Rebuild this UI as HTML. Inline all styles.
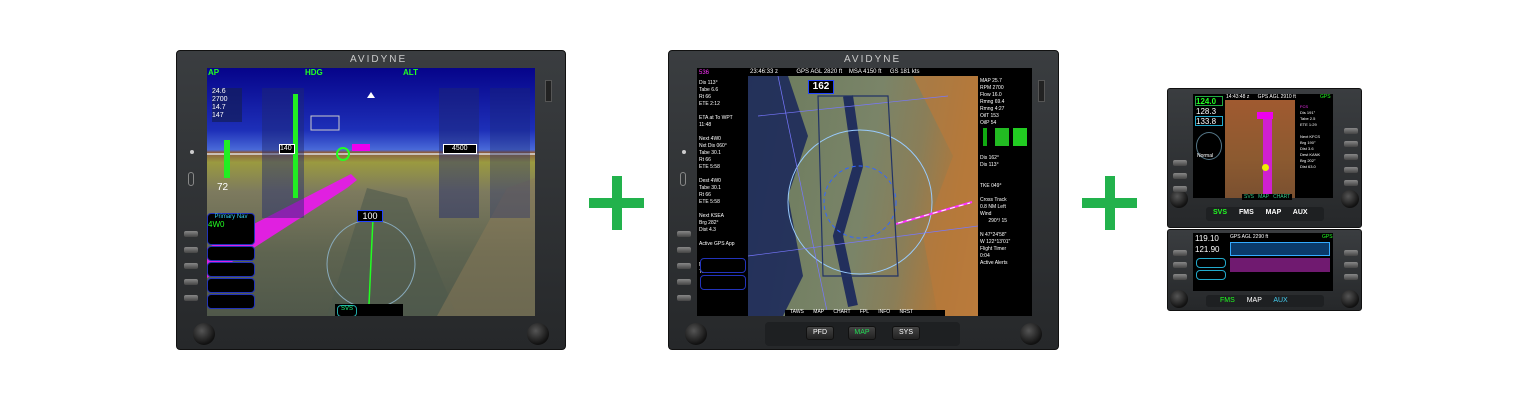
<!DOCTYPE html>
<html><head><meta charset="utf-8"><style>
*{margin:0;padding:0;box-sizing:border-box}
body{width:1536px;height:400px;background:#fff;position:relative;overflow:hidden;font-family:"Liberation Sans",sans-serif}
.a{position:absolute}
.bez{background:linear-gradient(#3a3d40,#26282a);border-radius:4px;border:1px solid #111}
.logo{color:#ccc;font-size:10px;letter-spacing:2px;font-weight:normal}
.knob{border-radius:50%;background:radial-gradient(circle at 40% 35%,#555,#111 70%)}
.btn{background:linear-gradient(#888,#444);border-radius:2px;height:6px;width:14px}
.plus{background:#22b24c}
.t{color:#fff;font-size:6px;white-space:nowrap}
.g{color:#2f2}
.m{color:#f3f}
.box{border:1px solid #2233bb;border-radius:4px;background:#000}
</style></head><body>

<!-- Device 1 PFD -->
<div class="a bez" style="left:176px;top:50px;width:390px;height:300px"></div>
<div class="a logo" style="left:350px;top:54px">AVIDYNE</div>
<div class="a" style="left:207px;top:68px;width:328px;height:248px;overflow:hidden;background:linear-gradient(#06048a 0%,#1d2fb8 25%,#4a6ad8 33%,#8a5a40 34%,#9a9a40 38%,#7d7a5e 50%,#5e6450 75%,#50584a 100%)">
 <svg class="a" style="left:0;top:0" width="328" height="248">
  <polygon points="0,180 0,210 140,120 150,112 144,106" fill="#e020e0"/>
  <polygon points="120,248 160,120 200,130 250,248" fill="#4e5a4c" opacity=".6"/>
  <polygon points="230,248 300,120 328,110 328,248" fill="#8a7a58" opacity=".5"/>
  <line x1="0" y1="86" x2="328" y2="86" stroke="#ddd" stroke-width="1.5"/>
  <circle cx="164" cy="196" r="44" fill="none" stroke="#8ab" stroke-width="1"/>
  <line x1="166" y1="150" x2="162" y2="236" stroke="#2f2" stroke-width="1.5"/>
  <circle cx="136" cy="86" r="6" fill="none" stroke="#2f2" stroke-width="2"/>
  <rect x="104" y="48" width="28" height="14" fill="none" stroke="#ccc"/>
  <polygon points="160,30 168,30 164,24" fill="#fff"/>
 </svg>
 <div class="a t g" style="left:1px;top:0;font-size:8px;font-weight:bold">AP</div>
 <div class="a t g" style="left:98px;top:0;font-size:8px;font-weight:bold">HDG</div>
 <div class="a t g" style="left:196px;top:0;font-size:8px;font-weight:bold">ALT</div>
 <div class="a" style="left:5px;top:20px;width:30px;height:34px;background:rgba(20,30,90,.7)"><div class="t" style="font-size:7px;line-height:8px">24.6<br>2700<br>14.7<br>147</div></div>
 <div class="a" style="left:17px;top:72px;width:6px;height:38px;background:#2e2"></div>
 <div class="a t" style="left:10px;top:114px;font-size:10px">72</div>
 <div class="a" style="left:55px;top:20px;width:42px;height:130px;background:rgba(30,40,110,.45)"></div>
 <div class="a" style="left:86px;top:26px;width:5px;height:104px;background:#2e2"></div>
 <div class="a" style="left:72px;top:76px;width:16px;height:10px;background:#000;border:1px solid #fff"><div class="t" style="font-size:7px">140</div></div>
 <div class="a" style="left:232px;top:20px;width:40px;height:130px;background:rgba(30,40,110,.45)"></div>
 <div class="a" style="left:236px;top:76px;width:34px;height:10px;background:#000;border:1px solid #fff"><div class="t" style="font-size:7px;padding-left:8px">4500</div></div>
 <div class="a" style="left:283px;top:20px;width:40px;height:130px;background:rgba(30,40,110,.35)"></div>
 <div class="a" style="left:145px;top:76px;width:18px;height:7px;background:#e0e"></div>
 <div class="a" style="left:150px;top:142px;width:26px;height:12px;background:#000;border:1.5px solid #24f"><div class="t" style="font-size:9px;text-align:center">100</div></div>
 <div class="a" style="left:0;top:145px;width:48px;height:94px">
  <div class="box" style="height:32px"><div class="t" style="color:#3ce;text-align:center">Primary Nav</div><div class="t g" style="font-size:8px">4W0</div></div>
  <div class="box" style="height:15px;margin-top:1px"></div>
  <div class="box" style="height:15px;margin-top:1px"></div>
  <div class="box" style="height:15px;margin-top:1px"></div>
  <div class="box" style="height:15px;margin-top:1px"></div>
 </div>
 <div class="a" style="left:128px;top:236px;width:68px;height:12px;background:#000"></div>
 <div class="a box" style="left:130px;top:237px;width:20px;height:12px;border-color:#2aa"><div class="t" style="color:#2f8;text-align:center">SVS</div></div>
</div>
<div class="a" style="left:545px;top:80px;width:7px;height:22px;background:#222;border:1px solid #555"></div>
<div class="a" style="left:190px;top:150px;width:4px;height:4px;border-radius:50%;background:#ccc"></div>
<div class="a" style="left:188px;top:172px;width:6px;height:14px;border:1px solid #888;border-radius:3px"></div>
<div class="a btn" style="left:184px;top:231px"></div>
<div class="a btn" style="left:184px;top:247px"></div>
<div class="a btn" style="left:184px;top:263px"></div>
<div class="a btn" style="left:184px;top:279px"></div>
<div class="a btn" style="left:184px;top:295px"></div>
<div class="a knob" style="left:193px;top:323px;width:22px;height:22px"></div>
<div class="a knob" style="left:527px;top:323px;width:22px;height:22px"></div>

<!-- plus 1 -->
<div class="a plus" style="left:589px;top:198px;width:55px;height:10px"></div>
<div class="a plus" style="left:612px;top:176px;width:10px;height:54px"></div>

<!-- Device 2 MFD -->
<div class="a bez" style="left:668px;top:50px;width:391px;height:300px"></div>
<div class="a logo" style="left:844px;top:54px">AVIDYNE</div>
<div class="a" style="left:697px;top:68px;width:335px;height:248px;background:#000"></div>
<div class="a" style="left:748px;top:76px;width:230px;height:240px;overflow:hidden;background:linear-gradient(100deg,#6a7a5c 0%,#7a8468 50%,#8a7e58 68%,#b0783a 85%,#c08040 100%)">
 <svg class="a" width="230" height="240">
  <path d="M40,0 L60,60 L40,120 L55,200 L35,240 L0,240 L0,0Z" fill="#0c1a5a" opacity=".75"/>
  <path d="M100,20 L110,90 L90,160 L105,230" stroke="#0c1a5a" stroke-width="10" fill="none" opacity=".8"/>
  <path d="M165,0 L230,0 L230,240 L190,240 L175,160 L205,80Z" fill="#b8793a" opacity=".7"/>
  <circle cx="112" cy="126" r="72" fill="none" stroke="#9cf" stroke-width="1"/>
  <circle cx="112" cy="126" r="36" fill="none" stroke="#36f" stroke-width="1" stroke-dasharray="4 3"/>
  <line x1="148" y1="148" x2="224" y2="126" stroke="#f3f" stroke-width="2"/>
  <line x1="150" y1="147" x2="222" y2="127" stroke="#fff" stroke-width="1" stroke-dasharray="5 4"/>
  <path d="M10,40 L200,20 M0,180 L230,150 M30,0 L80,240" stroke="#77f" stroke-width=".7" fill="none"/>
  <path d="M70,20 L140,20 L150,200 L75,200Z" stroke="#223366" stroke-width="1.2" fill="none"/>
 </svg>
 <div class="a" style="left:60px;top:4px;width:26px;height:14px;background:#000;border:1.5px solid #24f"><div class="t" style="font-size:10px;text-align:center;font-weight:bold">162</div></div>
</div>
<div class="a t" style="left:750px;top:69px">23:46:33 z &nbsp;&nbsp;&nbsp;&nbsp;&nbsp;&nbsp;&nbsp;&nbsp;&nbsp; GPS AGL 2820 ft &nbsp;&nbsp; MSA 4150 ft &nbsp;&nbsp;&nbsp; GS 181 kts</div>
<div class="a t m" style="left:699px;top:70px">536</div>
<div class="a t" style="left:699px;top:80px;font-size:5px;line-height:7px">Dis 113°<br>Tabe 6.6<br>Rt 66<br>ETE 2:12<br><br>ETA at To WPT<br>11:48<br><br>Next 4W0<br>Nxt Dis 060°<br>Tabe 30.1<br>Rt 66<br>ETE 5:58<br><br>Dest 4W0<br>Tabe 30.1<br>Rt 66<br>ETE 5:58<br><br>Next KSEA<br>Brg 282°<br>Dist 4.3<br><br>Active GPS App<br><br><br>Nav Mode<br>Terminal</div>
<div class="a box" style="left:700px;top:258px;width:46px;height:15px"></div>
<div class="a box" style="left:700px;top:275px;width:46px;height:15px"></div>
<div class="a t" style="left:980px;top:78px;font-size:5px;line-height:7px">MAP 25.7<br>RPM 2700<br>Flow 16.0<br>Rmng 69.4<br>Rmng 4:27<br>OilT 153<br>OilP 54</div>
<div class="a" style="left:983px;top:128px;width:44px;height:18px;background:linear-gradient(90deg,#1a1 0,#1a1 4px,#000 4px,#000 12px,#2b2 12px,#2b2 26px,#000 26px,#000 30px,#2c2 30px)"></div>
<div class="a t" style="left:980px;top:155px;font-size:5px;line-height:7px">Dis 162°<br>Dis 113°<br><br><br>TKE 049°<br><br>Cross Track<br>0.8 NM Left<br>Wind<br>&nbsp;&nbsp;&nbsp;&nbsp;&nbsp;&nbsp;290°/ 15<br><br>N 47°24'58"<br>W 122°13'01"<br>Flight Timer<br>0:04<br>Active Alerts</div>
<div class="a" style="left:785px;top:310px;width:160px;height:6px;background:#000"></div>
<div class="a t" style="left:790px;top:309px;font-size:5px;word-spacing:8px">TAWS MAP CHART FPL INFO NRST</div>
<div class="a" style="left:765px;top:322px;width:195px;height:24px;background:#1e2022;border-radius:4px"></div>
<div class="a" style="left:806px;top:326px;width:28px;height:14px;background:linear-gradient(#444,#222);border-radius:3px;border:1px solid #111"><div class="t" style="font-size:7px;text-align:center;line-height:12px">PFD</div></div>
<div class="a" style="left:848px;top:326px;width:28px;height:14px;background:linear-gradient(#444,#222);border-radius:3px;border:1px solid #111"><div class="t" style="font-size:7px;text-align:center;line-height:12px;color:#2d5">MAP</div></div>
<div class="a" style="left:892px;top:326px;width:28px;height:14px;background:linear-gradient(#444,#222);border-radius:3px;border:1px solid #111"><div class="t" style="font-size:7px;text-align:center;line-height:12px">SYS</div></div>
<div class="a" style="left:1038px;top:80px;width:7px;height:22px;background:#222;border:1px solid #555"></div>
<div class="a" style="left:682px;top:150px;width:4px;height:4px;border-radius:50%;background:#ccc"></div>
<div class="a" style="left:680px;top:172px;width:6px;height:14px;border:1px solid #888;border-radius:3px"></div>
<div class="a btn" style="left:677px;top:231px"></div>
<div class="a btn" style="left:677px;top:247px"></div>
<div class="a btn" style="left:677px;top:263px"></div>
<div class="a btn" style="left:677px;top:279px"></div>
<div class="a btn" style="left:677px;top:295px"></div>
<div class="a knob" style="left:685px;top:323px;width:22px;height:22px"></div>
<div class="a knob" style="left:1020px;top:323px;width:22px;height:22px"></div>

<!-- plus 2 -->
<div class="a plus" style="left:1082px;top:198px;width:55px;height:10px"></div>
<div class="a plus" style="left:1105px;top:176px;width:10px;height:54px"></div>

<!-- Device 3 IFD stack -->
<div class="a bez" style="left:1167px;top:88px;width:195px;height:140px;border-radius:3px"></div>
<div class="a bez" style="left:1167px;top:229px;width:195px;height:82px;border-radius:3px"></div>
<div class="a" style="left:1193px;top:94px;width:140px;height:104px;background:#000"></div>
<div class="a" style="left:1225px;top:100px;width:70px;height:98px;background:linear-gradient(#a05a30,#8c5a30 60%,#7a5030)"></div>
<div class="a" style="left:1263px;top:112px;width:9px;height:86px;background:#d020d0"></div>
<div class="a" style="left:1257px;top:112px;width:16px;height:7px;background:#e0e"></div>
<div class="a" style="left:1262px;top:164px;width:7px;height:7px;border-radius:50%;background:#ee0"></div>
<div class="a" style="left:1195px;top:96px;width:28px;height:10px;background:#000;border:1px solid #2a4"><div class="t g" style="font-size:8px;font-weight:bold">124.0</div></div>
<div class="a t" style="left:1196px;top:107px;font-size:8px">128.3</div>
<div class="a" style="left:1195px;top:116px;width:28px;height:10px;border:1px solid #2ac"><div class="t" style="font-size:8px">133.8</div></div>
<div class="a" style="left:1196px;top:132px;width:26px;height:28px;border-radius:50%;border:1px solid #578"></div>
<div class="a t" style="left:1197px;top:153px;font-size:5px">Normal</div>
<div class="a t" style="left:1226px;top:94px;font-size:5px">14:43:48 z &nbsp;&nbsp;&nbsp;&nbsp; GPS AGL 2910 ft</div>
<div class="a t g" style="left:1320px;top:94px;font-size:5px">GPS</div>
<div class="a t" style="left:1300px;top:104px;font-size:4px;line-height:6px"><span class="m">FCS</span><br>Dis 191°<br>Tabe 2.5<br>ETE 1:29<br><br>Next KFCS<br>Brg 190°<br>Dist 3.6<br>Dest KANK<br>Brg 202°<br>Dist 63.0</div>
<div class="a" style="left:1242px;top:194px;width:50px;height:6px;background:#000"></div>
<div class="a t" style="left:1244px;top:194px;font-size:5px;color:#3c8">SVS &nbsp; MAP &nbsp; CHART</div>
<div class="a" style="left:1206px;top:207px;width:118px;height:14px;background:#1e2022;border-radius:3px"></div>
<div class="a t" style="left:1213px;top:209px;font-size:7px;word-spacing:10px;font-weight:bold"><span class="g">SVS</span> FMS MAP AUX</div>
<div class="a" style="left:1193px;top:233px;width:140px;height:58px;background:#000"></div>
<div class="a" style="left:1230px;top:242px;width:100px;height:14px;background:#0a3a6a;border:1px solid #3af"></div>
<div class="a" style="left:1230px;top:258px;width:100px;height:14px;background:#701a70"></div>
<div class="a t" style="left:1195px;top:234px;font-size:8px">119.10</div>
<div class="a t" style="left:1195px;top:245px;font-size:8px">121.90</div>
<div class="a box" style="left:1196px;top:258px;width:30px;height:10px;border-color:#2ac"></div>
<div class="a box" style="left:1196px;top:270px;width:30px;height:10px;border-color:#2ac"></div>
<div class="a t" style="left:1230px;top:234px;font-size:5px">GPS AGL 2290 ft</div>
<div class="a t g" style="left:1322px;top:234px;font-size:5px">GPS</div>
<div class="a" style="left:1206px;top:295px;width:118px;height:12px;background:#1e2022;border-radius:3px"></div>
<div class="a t" style="left:1220px;top:297px;font-size:7px;word-spacing:10px"><span class="g">FMS</span> MAP <span style="color:#4ce">AUX</span></div>
<div class="a knob" style="left:1170px;top:190px;width:18px;height:18px"></div>
<div class="a knob" style="left:1341px;top:190px;width:18px;height:18px"></div>
<div class="a knob" style="left:1170px;top:290px;width:18px;height:18px"></div>
<div class="a knob" style="left:1341px;top:290px;width:18px;height:18px"></div>
<div class="a btn" style="left:1344px;top:128px"></div>
<div class="a btn" style="left:1344px;top:141px"></div>
<div class="a btn" style="left:1344px;top:154px"></div>
<div class="a btn" style="left:1344px;top:167px"></div>
<div class="a btn" style="left:1344px;top:180px"></div>
<div class="a btn" style="left:1173px;top:160px"></div>
<div class="a btn" style="left:1173px;top:173px"></div>
<div class="a btn" style="left:1173px;top:186px"></div>
<div class="a btn" style="left:1344px;top:250px"></div>
<div class="a btn" style="left:1344px;top:262px"></div>
<div class="a btn" style="left:1344px;top:274px"></div>
<div class="a btn" style="left:1173px;top:250px"></div>
<div class="a btn" style="left:1173px;top:262px"></div>
<div class="a btn" style="left:1173px;top:274px"></div>
</body></html>
